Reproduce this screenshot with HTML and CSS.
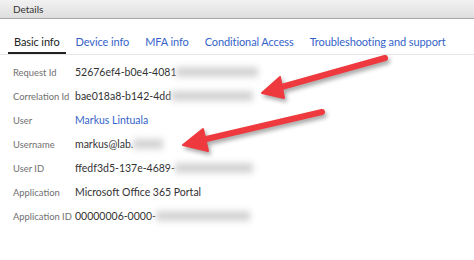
FILE: index.html
```html
<!DOCTYPE html>
<html>
<head>
<meta charset="utf-8">
<title>Details</title>
<link rel="stylesheet" href="styles.css">
</head>
<body>

<div class="titlebar">Details</div>

<div class="tabs">
<div class="tab tab_active">Basic info</div>
<div class="tab">Device info</div>
<div class="tab">MFA info</div>
<div class="tab">Conditional Access</div>
<div class="tab">Troubleshooting and support</div>
</div>

<div class="details">
<div class="row"><div class="label">Request Id</div><div class="value">52676ef4-b0e4-4081<span class="masked mask_req"></span></div></div>
<div class="row"><div class="label">Correlation Id</div><div class="value">bae018a8-b142-4dd<span class="masked mask_corr"></span></div></div>
<div class="row"><div class="label">User</div><div class="value link">Markus Lintuala</div></div>
<div class="row"><div class="label">Username</div><div class="value">markus@lab.<span class="masked mask_user"></span></div></div>
<div class="row"><div class="label">User ID</div><div class="value">ffedf3d5-137e-4689-<span class="masked mask_uid"></span></div></div>
<div class="row"><div class="label">Application</div><div class="value">Microsoft Office 365 Portal</div></div>
<div class="row"><div class="label">Application ID</div><div class="value">00000006-0000-<span class="masked mask_app"></span></div></div>
</div>

<svg class="arrows" width="474" height="260" viewBox="0 0 474 260">
<g fill="#ee3a3f" stroke="#ee3a3f" stroke-linecap="round" stroke-linejoin="round">
<line x1="385" y1="58" x2="278" y2="88" stroke-width="6"/>
<polygon points="262,93 280,77 284,98" stroke-width="2"/>
<line x1="322" y1="112" x2="202" y2="140" stroke-width="6"/>
<polygon points="183,145 203,129 208,151" stroke-width="2"/>
</g>
</svg>

</body>
</html>
```

FILE: styles.css
```css
body{
margin: 0;
background-color: #ffffff;
font-family: Lato, 'Noto Sans', sans-serif;
color: #333333;
overflow: hidden;
position: relative;
width: 474px;
height: 260px;
}

.titlebar{
height: 18px;
line-height: 18px;
padding-left: 13px;
font-size: 10px;
color: #333333;
background: linear-gradient(#f2f2f2, #dedede);
border-bottom: 1px solid #a6a6a6;
}

.tabs{
display: flex;
gap: 16px;
margin: 16px 0 0 0;
padding-left: 8px;
border-bottom: 1px solid #e6e6e6;
}

.tab{
font-size: 11px;
letter-spacing: -0.1px;
color: #3563c9;
padding: 0 0 6px 0;
white-space: nowrap;
}

.tab_active{
color: #222222;
padding-left: 6px;
padding-right: 6px;
margin-right: -6px;
border-bottom: 2px solid #222222;
padding-bottom: 4px;
}

.details{
padding: 5px 0 0 13px;
}

.row{
display: flex;
height: 24px;
align-items: center;
}

.label{
width: 62px;
font-size: 9.4px;
color: #707070;
white-space: nowrap;
}

.value{
font-size: 10.5px;
color: #333333;
display: flex;
align-items: center;
white-space: nowrap;
}

.link{
color: #3563c9;
}

.masked{
display: inline-block;
height: 10px;
background-color: #d4d4d4;
filter: blur(3px);
}

.mask_req{ width: 82px; }
.mask_corr{ width: 82px; }
.mask_user{ width: 30px; }
.mask_uid{ width: 78px; }
.mask_app{ width: 94px; }

.arrows{
position: absolute;
top: 0;
left: 0;
filter: drop-shadow(2px 3px 2px rgba(0,0,0,0.35));
}
```
